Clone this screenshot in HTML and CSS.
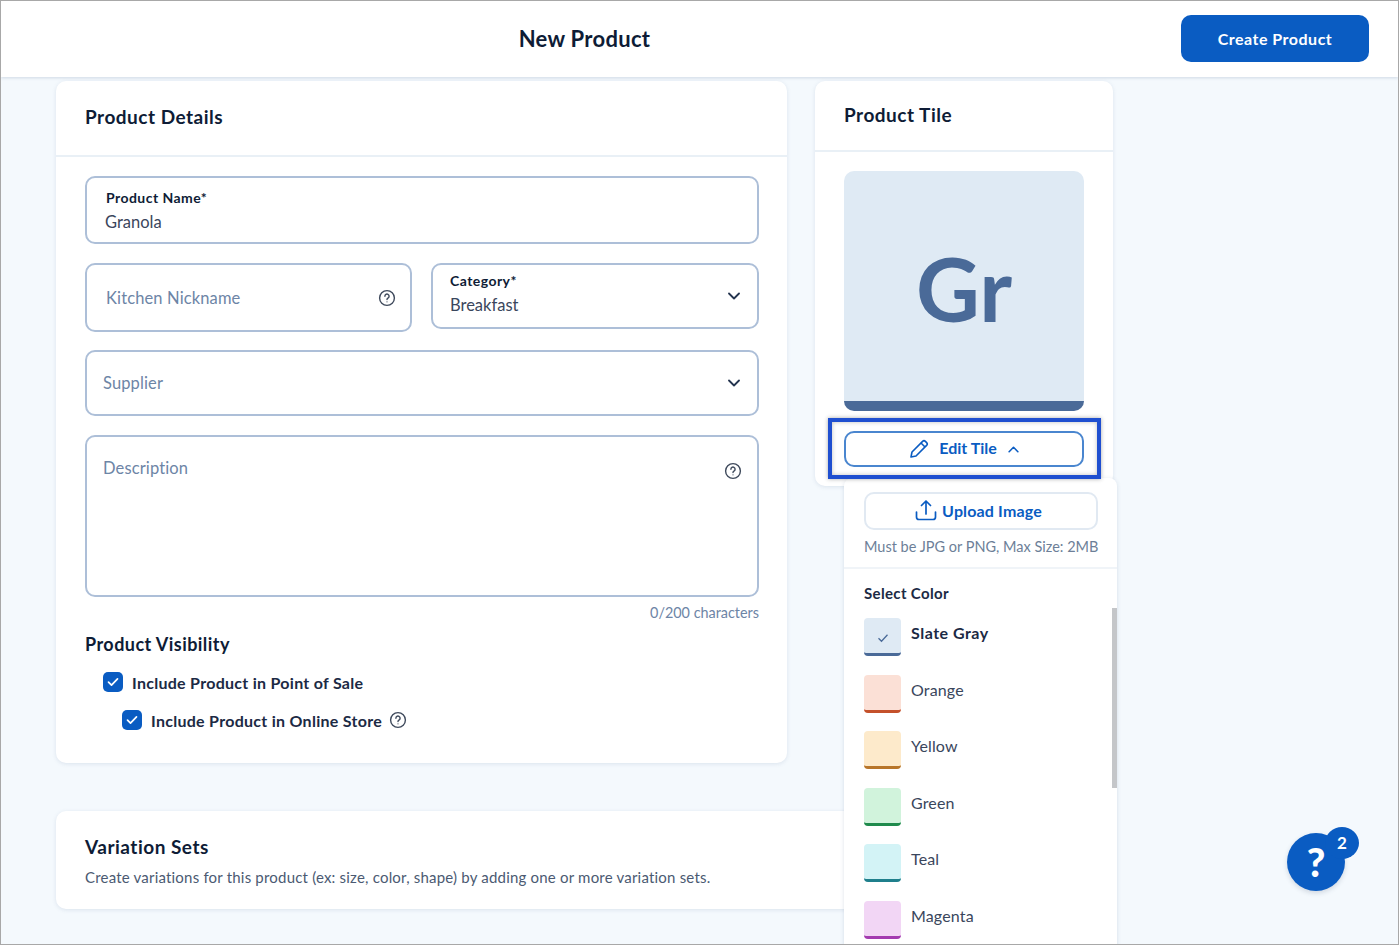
FILE: index.html
```html
<!DOCTYPE html>
<html lang="en">
<head>
    <meta charset="UTF-8">
    <title>New Product</title>
    <link rel="stylesheet" href="styles.css">
</head>
<body>
<div class="app">
    <header class="topbar">
        <h1 class="page-title">New Product</h1>
        <button class="btn-primary">Create Product</button>
    </header>

    <main class="content">
        <section class="card details-card">
            <h2 class="card-title details-title">Product Details</h2>
            <div class="form">
                <div class="field name-field">
                    <span class="field-label">Product Name*</span>
                    <span class="field-value">Granola</span>
                </div>
                <div class="form-row">
                    <div class="field nickname-field">
                        <span class="placeholder">Kitchen Nickname</span>
                        <svg class="help-icon" viewBox="0 0 18 18"><circle cx="9" cy="9" r="7.4"/><path d="M6.9 7.2a2.1 2.1 0 1 1 3.3 1.7c-.8.5-1.2.9-1.2 1.7"/><circle class="dot" cx="9" cy="12.8" r=".6"/></svg>
                    </div>
                    <div class="field category-field">
                        <div class="field-stack">
                            <span class="field-label">Category*</span>
                            <span class="field-value">Breakfast</span>
                        </div>
                        <svg class="chevron" viewBox="0 0 12 8"><path d="M1 1.5l5 5 5-5"/></svg>
                    </div>
                </div>
                <div class="field supplier-field">
                    <span class="placeholder">Supplier</span>
                    <svg class="chevron" viewBox="0 0 12 8"><path d="M1 1.5l5 5 5-5"/></svg>
                </div>
                <div class="field description-field">
                    <span class="placeholder">Description</span>
                    <svg class="help-icon" viewBox="0 0 18 18"><circle cx="9" cy="9" r="7.4"/><path d="M6.9 7.2a2.1 2.1 0 1 1 3.3 1.7c-.8.5-1.2.9-1.2 1.7"/><circle class="dot" cx="9" cy="12.8" r=".6"/></svg>
                </div>
                <div class="char-count">0/200 characters</div>
            </div>
            <h3 class="visibility-title">Product Visibility</h3>
            <label class="check-row">
                <span class="checkbox"><svg viewBox="0 0 12 10"><path d="M1.5 5.2l3 3 6-6.4"/></svg></span>
                Include Product in Point of Sale
            </label>
            <label class="check-row nested">
                <span class="checkbox"><svg viewBox="0 0 12 10"><path d="M1.5 5.2l3 3 6-6.4"/></svg></span>
                Include Product in Online Store
                <svg class="help-icon" viewBox="0 0 18 18"><circle cx="9" cy="9" r="7.4"/><path d="M6.9 7.2a2.1 2.1 0 1 1 3.3 1.7c-.8.5-1.2.9-1.2 1.7"/><circle class="dot" cx="9" cy="12.8" r=".6"/></svg>
            </label>
        </section>

        <aside class="card tile-card">
            <h2 class="card-title tile-title">Product Tile</h2>
            <div class="tile-body">
                <div class="tile-preview">Gr</div>
                <button class="btn-edit">
                    <svg class="pencil" viewBox="0 0 20 20"><path d="M2 18l1-5L13.6 2.4a2 2 0 0 1 2.8 0l1.2 1.2a2 2 0 0 1 0 2.8L7 17z"/><path d="M12 4l4 4"/></svg>
                    Edit Tile
                    <svg class="chevron-up" viewBox="0 0 12 8"><path d="M1 6.5l5-5 5 5"/></svg>
                </button>
            </div>
            <div class="highlight-box"></div>

            <div class="tile-menu">
                <div class="menu-upload">
                    <button class="btn-upload">
                        <svg class="upload-icon" viewBox="0 0 22 22"><path d="M11 15V2M6.5 6.5L11 2l4.5 4.5"/><path d="M1.5 13v5a2.5 2.5 0 0 0 2.5 2.5h14a2.5 2.5 0 0 0 2.5-2.5v-5"/></svg>
                        Upload Image
                    </button>
                    <p class="upload-hint">Must be JPG or PNG, Max Size: 2MB</p>
                </div>
                <div class="menu-colors">
                    <h4 class="select-title">Select Color</h4>
                    <div class="color-row selected">
                        <span class="swatch slate"><svg viewBox="0 0 12 10"><path d="M1.5 5.2l3 3 6-6.4"/></svg></span>
                        <span>Slate Gray</span>
                    </div>
                    <div class="color-row"><span class="swatch orange"></span><span>Orange</span></div>
                    <div class="color-row"><span class="swatch yellow"></span><span>Yellow</span></div>
                    <div class="color-row"><span class="swatch green"></span><span>Green</span></div>
                    <div class="color-row"><span class="swatch teal"></span><span>Teal</span></div>
                    <div class="color-row"><span class="swatch magenta"></span><span>Magenta</span></div>
                </div>
                <div class="menu-scrollbar"></div>
            </div>
        </aside>

        <section class="card variations-card">
            <h2 class="card-title">Variation Sets</h2>
            <p class="variations-text">Create variations for this product (ex: size, color, shape) by adding one or more variation sets.</p>
        </section>
    </main>

    <div class="help-bubble">?<span class="help-badge">2</span></div>
</div>
</body>
</html>
```

FILE: styles.css
```css
* {
    box-sizing: border-box;
}

body {
    margin: 0;
    font-family: "Lato", "Open Sans", sans-serif;
    color: #0e1c36;
}

.app {
    position: relative;
    height: 945px;
    overflow: hidden;
    background-color: #f4f9fd;
    border: 1px solid #a8a8a8;
}

.topbar {
    display: flex;
    align-items: center;
    height: 76px;
    padding: 0 0 2px 55px;
    background-color: #fff;
    box-shadow: 0 1px 3px rgba(60, 90, 130, 0.2);
    position: relative;
    z-index: 2;
}

.page-title {
    width: 1057px;
    margin: 0;
    font-size: 22px;
    font-weight: 700;
    text-align: center;
    letter-spacing: 0.3px;
}

.btn-primary {
    width: 188px;
    height: 47px;
    margin-left: 68px;
    border: none;
    border-radius: 10px;
    background-color: #0a5cc2;
    color: #fff;
    font: 700 16px "Lato", sans-serif;
    letter-spacing: 0.5px;
}

.content {
    display: grid;
    grid-template-columns: 731px 298px;
    column-gap: 28px;
    align-items: start;
    padding: 4px 0 0 55px;
}

.card {
    background-color: #fff;
    border-radius: 10px;
    box-shadow: 0 1px 4px rgba(70, 100, 140, 0.14);
}

.card-title {
    margin: 0;
    font-size: 19px;
    font-weight: 700;
    letter-spacing: 0.5px;
}

.details-card {
    height: 682px;
    padding: 0 28px 0 29px;
}

.details-title {
    height: 76px;
    margin: 0 -28px 0 -29px;
    padding: 24px 0 0 29px;
    border-bottom: 2px solid #e9f0f6;
}

.form {
    display: flex;
    flex-direction: column;
    padding-top: 19px;
}

.field {
    display: flex;
    align-items: center;
    justify-content: space-between;
    background-color: #fff;
    border: 2px solid #adbfd8;
    border-radius: 10px;
}

.field-label {
    display: block;
    font-size: 14px;
    font-weight: 700;
    line-height: 18px;
    letter-spacing: 0.45px;
}

.field-value {
    display: block;
    font-size: 16.5px;
    line-height: 22px;
    color: #3a465c;
}

.placeholder {
    font-size: 16.5px;
    letter-spacing: 0.13px;
    color: #6d85a6;
}

.name-field {
    display: block;
    height: 68px;
    padding: 11px 18px;
}

.name-field .field-label {
    margin-bottom: 4px;
    padding-left: 1px;
}

.form-row {
    display: flex;
    align-items: flex-start;
    gap: 19px;
    margin-top: 19px;
}

.nickname-field {
    width: 327px;
    height: 69px;
    padding: 0 14px 0 19px;
}

.category-field {
    width: 328px;
    height: 66px;
    padding: 0 17px;
}

.field-stack {
    padding-bottom: 4px;
}

.field-stack .field-label {
    margin-bottom: 4px;
}

.supplier-field {
    height: 66px;
    margin-top: 18px;
    padding: 0 17px 0 16px;
}

.description-field {
    align-items: flex-start;
    height: 162px;
    margin-top: 19px;
    padding: 21px 15px 0 16px;
}

.description-field .help-icon {
    margin-top: 4px;
}

.help-icon {
    width: 18px;
    height: 18px;
    flex-shrink: 0;
    fill: none;
    stroke: #3f4a5c;
    stroke-width: 1.4;
    stroke-linecap: round;
}

.help-icon .dot {
    fill: #3f4a5c;
    stroke: none;
}

.chevron {
    width: 12px;
    height: 8px;
    fill: none;
    stroke: #24344f;
    stroke-width: 1.8;
    stroke-linecap: round;
    stroke-linejoin: round;
}

.char-count {
    margin-top: 7px;
    font-size: 14.4px;
    text-align: right;
    color: #6d85a6;
}

.visibility-title {
    margin: 12px 0 0;
    font-size: 18px;
    font-weight: 700;
    letter-spacing: 0.45px;
}

.check-row {
    display: flex;
    align-items: center;
    gap: 9px;
    margin: 17px 0 0 18px;
    font-size: 16px;
    font-weight: 700;
    letter-spacing: 0.28px;
    color: #1c2a44;
}

.check-row.nested {
    margin: 18px 0 0 37px;
}

.check-row .help-icon {
    margin-left: -2px;
}

.checkbox {
    display: flex;
    align-items: center;
    justify-content: center;
    width: 20px;
    height: 20px;
    border-radius: 5px;
    background-color: #0a5cc2;
}

.checkbox svg {
    width: 12px;
    height: 10px;
    fill: none;
    stroke: #fff;
    stroke-width: 1.7;
    stroke-linecap: round;
    stroke-linejoin: round;
}

.tile-card {
    position: relative;
    height: 405px;
}

.tile-title {
    height: 71px;
    padding: 22px 0 0 29px;
    border-bottom: 2px solid #e9f0f6;
}

.tile-body {
    padding: 19px 29px 0;
}

.tile-preview {
    display: flex;
    align-items: center;
    justify-content: center;
    height: 240px;
    padding-top: 3px;
    border-radius: 10px;
    border-bottom: 10px solid #4a6a98;
    background-color: #dfeaf4;
    color: #4a6a98;
    font-size: 88px;
    font-weight: 700;
}

.btn-edit {
    display: flex;
    align-items: center;
    justify-content: center;
    gap: 10px;
    width: 100%;
    height: 36px;
    margin-top: 20px;
    padding: 0 0 3px;
    background-color: #fff;
    border: 2px solid #4a86cf;
    border-radius: 10px;
    color: #0a5cc2;
    font: 700 16px "Lato", sans-serif;
}

.pencil {
    width: 20px;
    height: 20px;
    margin-top: 3px;
    fill: none;
    stroke: #0a5cc2;
    stroke-width: 1.6;
    stroke-linejoin: round;
}

.chevron-up {
    width: 11px;
    height: 7px;
    margin: 4px 0 0 1px;
    fill: none;
    stroke: #0a5cc2;
    stroke-width: 1.8;
    stroke-linecap: round;
    stroke-linejoin: round;
}

/* callout drawn over the screenshot */
.highlight-box {
    position: absolute;
    left: 13px;
    top: 337px;
    width: 273px;
    height: 61px;
    border: 4px solid #1f4fd0;
    box-shadow: 0 0 4px rgba(40, 40, 40, 0.4), inset 0 0 4px rgba(40, 40, 40, 0.3);
    z-index: 4;
}

.tile-menu {
    position: absolute;
    left: 29px;
    top: 397px;
    width: 273px;
    height: 480px;
    background-color: #fff;
    border-radius: 8px;
    box-shadow: 0 1px 4px rgba(70, 100, 140, 0.18);
    z-index: 3;
}

.menu-upload {
    height: 91px;
    padding: 14px 19px 0 20px;
    border-bottom: 2px solid #f0f4f8;
}

.btn-upload {
    display: flex;
    align-items: center;
    justify-content: center;
    gap: 5px;
    width: 100%;
    height: 38px;
    padding: 0 5px 2px 0;
    background-color: #fff;
    border: 2px solid #e1e9f2;
    border-radius: 10px;
    color: #0a5cc2;
    font: 700 16px "Lato", sans-serif;
    letter-spacing: 0.15px;
}

.upload-icon {
    width: 22px;
    height: 22px;
    fill: none;
    stroke: #0a5cc2;
    stroke-width: 1.7;
    stroke-linecap: round;
    stroke-linejoin: round;
}

.upload-hint {
    margin: 8px 0 0;
    font-size: 14.5px;
    white-space: nowrap;
    color: #6d7f98;
}

.menu-colors {
    padding: 14px 20px 0;
}

.select-title {
    margin: 0 0 15px;
    font-size: 15px;
    font-weight: 700;
    line-height: 20px;
    letter-spacing: 0.35px;
    color: #1c2a44;
}

.color-row {
    display: flex;
    align-items: flex-start;
    gap: 10px;
    height: 56.5px;
    font-size: 16px;
    line-height: 29px;
    letter-spacing: 0.15px;
    color: #3a465c;
}

.color-row.selected {
    font-weight: 700;
    letter-spacing: 0.5px;
    color: #1c2a44;
}

.swatch {
    display: flex;
    align-items: center;
    justify-content: center;
    width: 37px;
    height: 38px;
    border-radius: 4px;
    border-bottom: 3px solid;
}

.swatch svg {
    width: 12px;
    height: 10px;
    margin-top: 4px;
    fill: none;
    stroke: #4a6a98;
    stroke-width: 1.3;
}

.slate { background-color: #dfeaf4; border-color: #4a6a98; }
.orange { background-color: #fbe0d6; border-color: #c4512b; }
.yellow { background-color: #fdeacb; border-color: #b8762a; }
.green { background-color: #d1f3dc; border-color: #1f8a4c; }
.teal { background-color: #d3f3f6; border-color: #1f7f8c; }
.magenta { background-color: #f2d6f5; border-color: #a43bb0; }

.menu-scrollbar {
    position: absolute;
    right: 0;
    top: 130px;
    width: 5px;
    height: 180px;
    background-color: #c4c6c9;
}

.variations-card {
    grid-column: 1 / 3;
    height: 98px;
    margin-top: 48px;
    padding: 24px 29px 0;
}

.variations-text {
    margin: 10px 0 0;
    font-size: 15px;
    letter-spacing: 0.2px;
    color: #4b5a72;
}

.help-bubble {
    position: absolute;
    left: 1286px;
    top: 832px;
    width: 58px;
    height: 58px;
    border-radius: 50%;
    background-color: #0a5cc2;
    color: #fff;
    font-size: 40px;
    font-weight: 900;
    line-height: 58px;
    text-align: center;
    box-shadow: 0 2px 5px rgba(60, 80, 110, 0.2);
}

.help-badge {
    position: absolute;
    left: 38px;
    top: -6px;
    width: 34px;
    height: 32px;
    border-radius: 50%;
    background-color: #0a5cc2;
    font-size: 17px;
    font-weight: 700;
    line-height: 32px;
}
```
